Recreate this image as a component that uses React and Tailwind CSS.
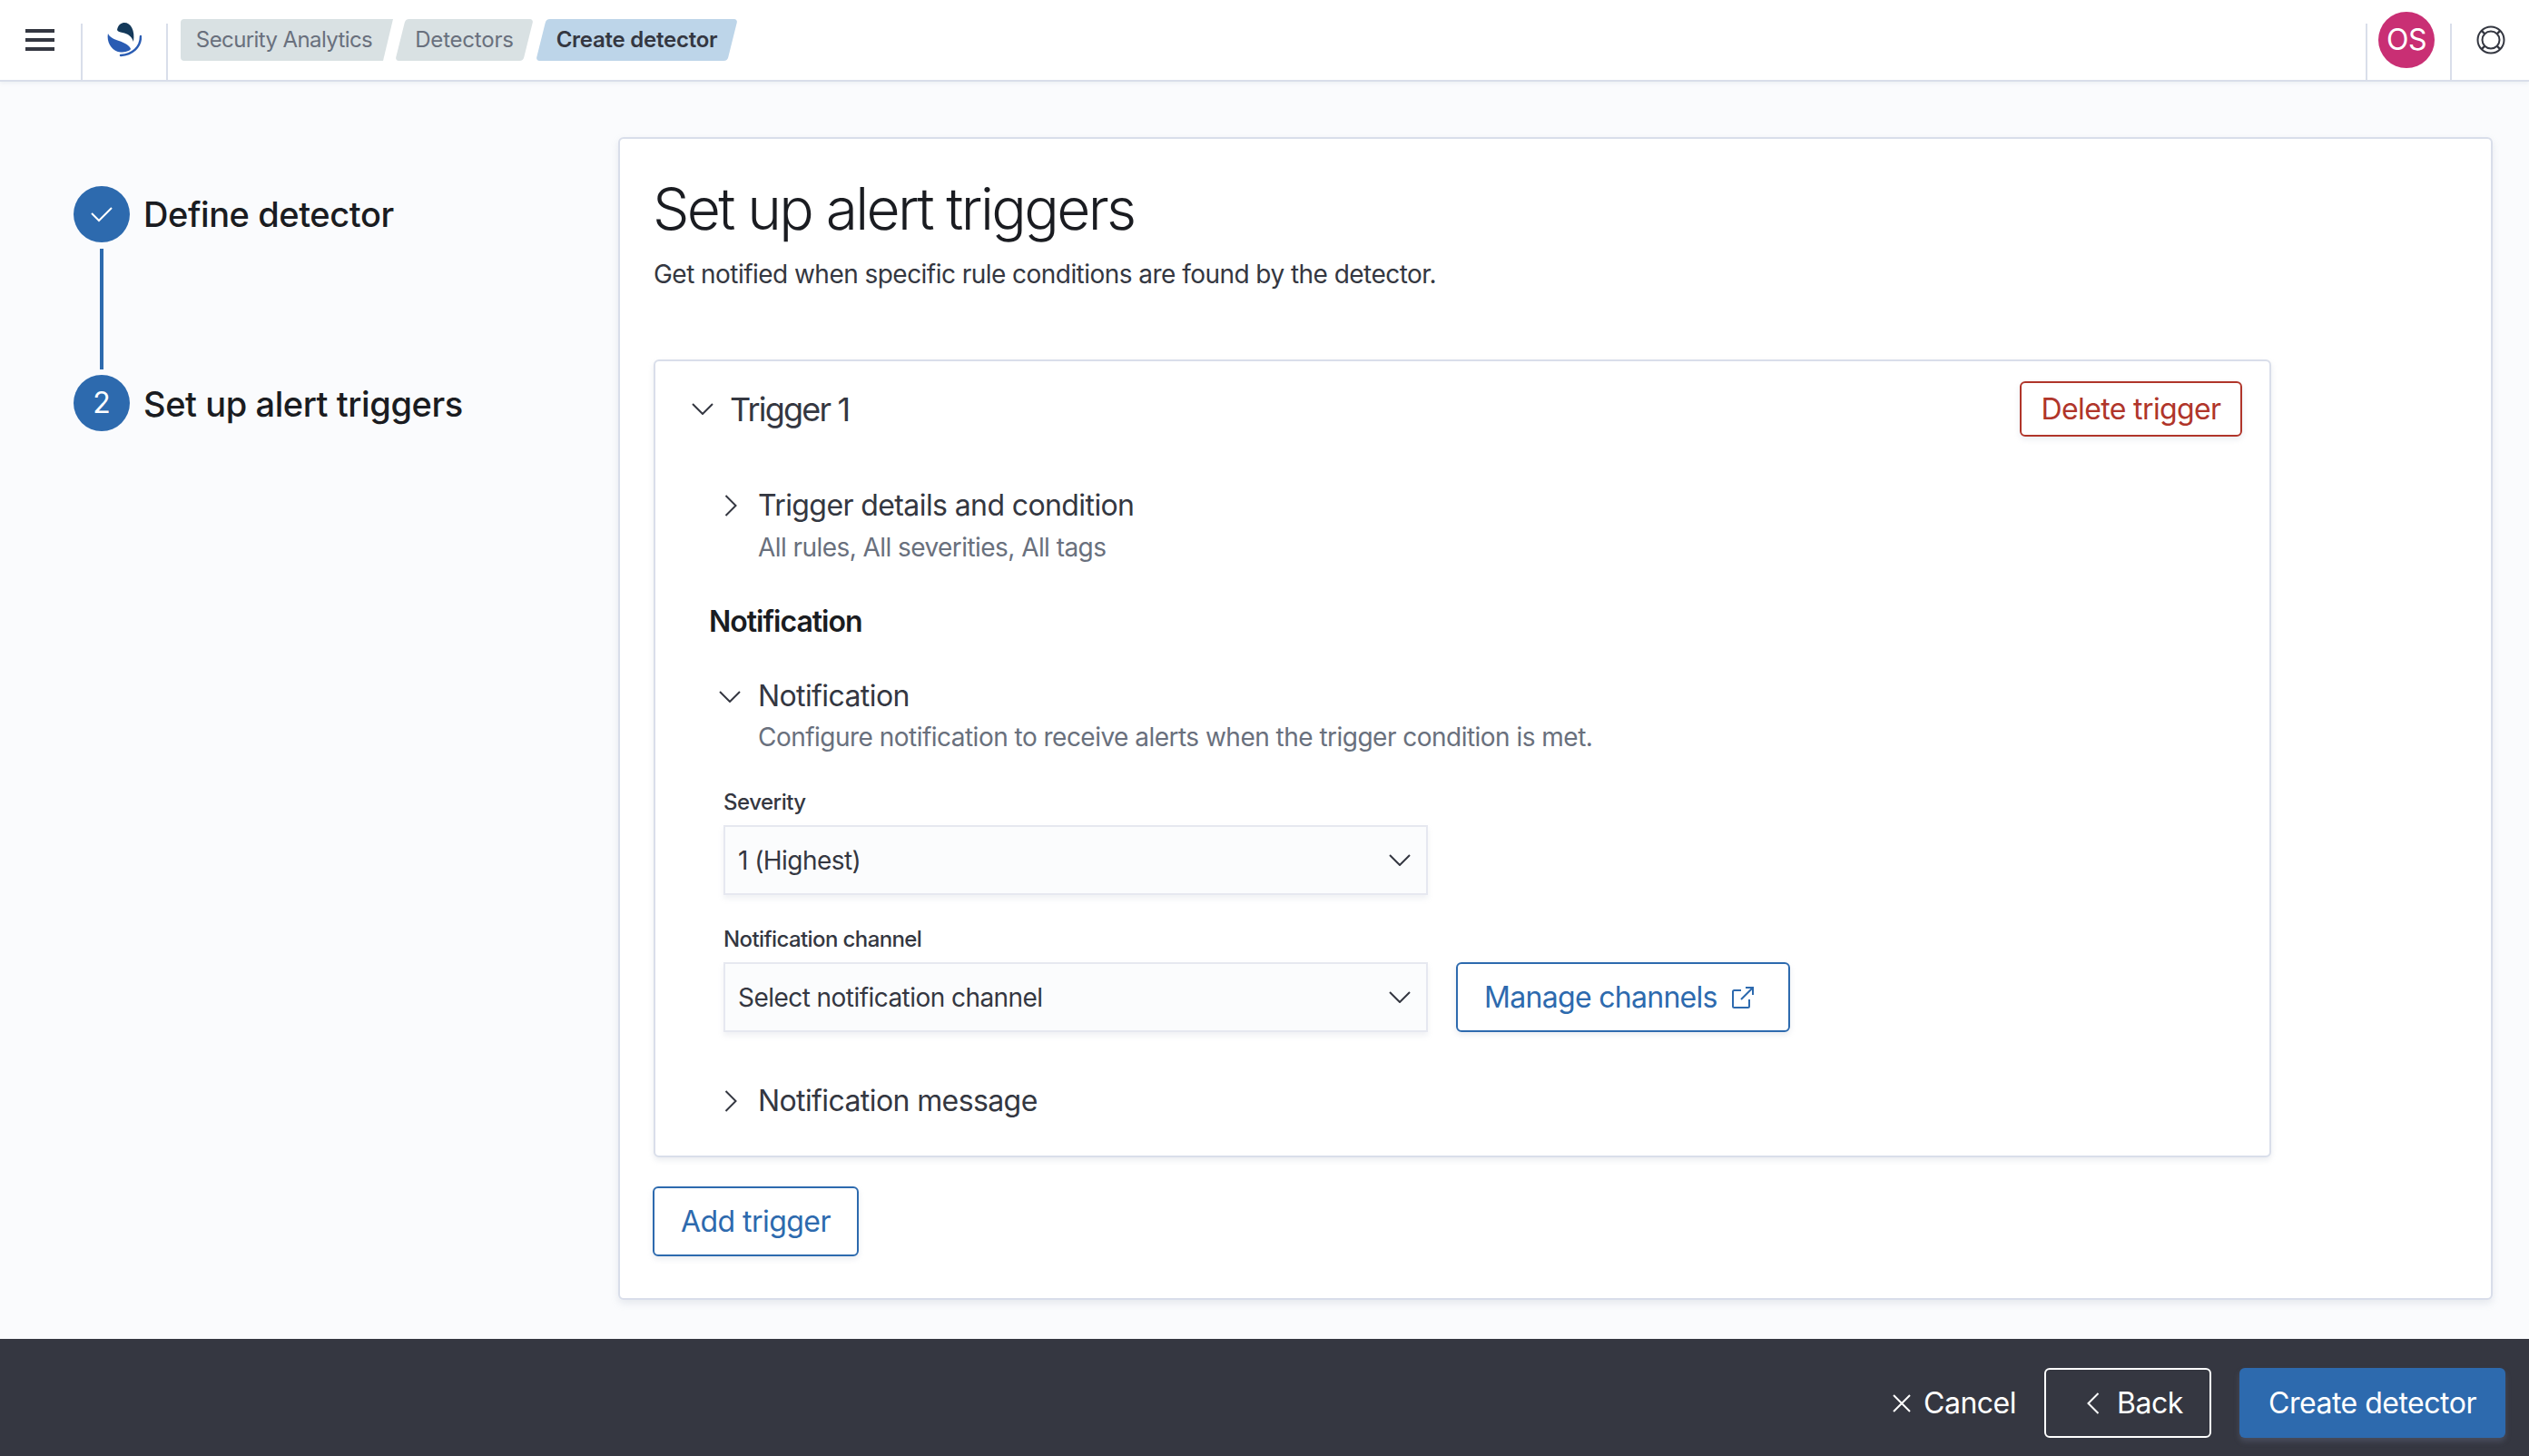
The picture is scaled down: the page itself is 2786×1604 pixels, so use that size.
const Sep = () => <div className="w-[2px] h-[62px] self-end bg-[#d9deea]" />

function Logo() {
  return (
    <svg width="38" height="38" viewBox="118 25 38 38" fill="none">
      <path d="M129 33C130 27 134 25 137 25C144 25 149 33 147 46C145 40 141 37 135 36C132 35.5 130 35 129 33Z" fill="#14395a" />
      <path d="M119 37C117 46 123 57 133 57.5C138 57.5 143 56 144 54C143 50 137 47 131 45C125 43 121 41 119 37Z" fill="#2a5cb3" />
      <path d="M155 40C155 52 146 60 133 61" stroke="#2a5cb3" strokeWidth="2.5" strokeLinecap="round" />
    </svg>
  )
}

function Help() {
  return (
    <svg width="32" height="32" viewBox="0 0 32 32" fill="none" stroke="#343741" strokeWidth="2">
      <circle cx="16" cy="16" r="14.5" />
      <circle cx="16" cy="16" r="9.5" />
      <path d="M5.5 5.5l3.8 3.8M26.5 5.5l-3.8 3.8M5.5 26.5l3.8-3.8M26.5 26.5l-3.8-3.8" strokeWidth="2.4" />
    </svg>
  )
}

function ExternalIcon() {
  return (
    <svg width="26" height="26" viewBox="0 0 26 26" fill="none" stroke="#2d6aae" strokeWidth="2">
      <path d="M11 5H3.5A1.5 1.5 0 0 0 2 6.5v16A1.5 1.5 0 0 0 3.5 24h15a1.5 1.5 0 0 0 1.5-1.5V15" />
      <path d="M11 15L24 2M16 2h8v8" />
    </svg>
  )
}

const ChevronDown = ({ className }) => (
  <svg width="24" height="13" viewBox="0 0 24 13" fill="none" stroke="currentColor" strokeWidth="2" className={className}>
    <path d="M1 1l11 11L23 1" />
  </svg>
)

const ChevronRight = ({ className }) => (
  <svg width="14" height="24" viewBox="0 0 14 24" fill="none" stroke="currentColor" strokeWidth="2" className={className}>
    <path d="M1.5 1L12.5 12L1.5 23" />
  </svg>
)

function Header() {
  return (
    <header className="h-[90px] shrink-0 flex bg-white border-b-2 border-[#d9deea] shadow-[0_2px_4px_rgba(152,162,179,0.12)]">
      <div className="w-[89px] h-[88px] flex flex-col items-center justify-center gap-[6px] pb-[1px] pr-[2px]">
        <div className="w-[32px] h-[4px] bg-[#343741]" />
        <div className="w-[32px] h-[4px] bg-[#343741]" />
        <div className="w-[32px] h-[4px] bg-[#343741]" />
      </div>
      <Sep />
      <div className="w-[92px] flex items-center justify-center pb-[1px]">
        <Logo />
      </div>
      <Sep />
      <nav className="flex items-start pt-[21px] ml-[14px] text-[24px] leading-[46px]">
        <div className="w-[234px] h-[46px] mr-[8px] bg-[#d9e1e3] text-[#69707d] tracking-[-0.6px] text-center rounded-l-[4px] pr-[6px] [clip-path:polygon(0_0,100%_0,calc(100%-11px)_100%,0_100%)]">
          Security Analytics
        </div>
        <div className="w-[141px] h-[46px] mr-[14px] bg-[#d9e1e3] text-[#69707d] tracking-[-0.2px] text-center rounded-[4px] -skew-x-[14deg]">
          <div className="skew-x-[14deg]">Detectors</div>
        </div>
        <div className="w-[211px] h-[46px] bg-[#bdd5e9] text-[#343741] font-semibold tracking-[-0.24px] text-center rounded-[4px] -skew-x-[14deg]">
          <div className="skew-x-[14deg]">Create detector</div>
        </div>
      </nav>
      <div className="ml-auto flex">
        <Sep />
        <div className="w-[91px] flex items-center justify-center pb-[1px] pr-[5px]">
          <div className="w-[62px] h-[62px] rounded-full bg-[#c92f74] text-white text-[32px] tracking-[-0.5px] flex items-center justify-center">OS</div>
        </div>
        <Sep />
        <div className="w-[85px] flex items-center justify-center pb-[1px]">
          <Help />
        </div>
      </div>
    </header>
  )
}

function Stepper() {
  return (
    <aside className="w-[681px] shrink-0 pl-[81px] pt-[115px] flex gap-[15px]">
      <div className="flex flex-col items-center">
        <div className="w-[62px] h-[62px] rounded-full bg-[#2d6aae] flex items-center justify-center">
          <svg width="24" height="18" viewBox="0 0 24 18" fill="none" stroke="white" strokeWidth="2">
            <path d="M1 8l8 8L23 2" />
          </svg>
        </div>
        <div className="w-[4px] h-[133px] mt-[7px] mb-[6px] bg-[#2d6aae]" />
        <div className="w-[62px] h-[62px] rounded-full bg-[#2d6aae] text-white text-[32px] flex items-center justify-center">2</div>
      </div>
      <div className="text-[#1a1c21] text-[38px] font-medium tracking-[-0.42px] leading-[62px]">
        <div>Define detector</div>
        <div className="mt-[147px]">Set up alert triggers</div>
      </div>
    </aside>
  )
}

function Select({ children }) {
  return (
    <div className="w-[776px] h-[77px] flex items-center justify-between pl-[14px] pr-[17px] text-[28px] tracking-[-0.55px] text-[#343741] bg-[#fbfcfd] border-2 border-[#e6e8f0] shadow-[0_4px_6px_rgba(152,162,179,0.15)]">
      {children}
      <ChevronDown />
    </div>
  )
}

function TriggerPanel() {
  return (
    <section className="w-[1782px] h-[879px] mt-[74px] bg-white border-2 border-[#d9deea] rounded-[6px] shadow-[0_3px_6px_rgba(152,162,179,0.2)] pt-[22px] pr-[30px] pb-[40px]">
      <div className="h-[61px] flex items-center pl-[40px]">
        <ChevronDown className="text-[#343741]" />
        <span className="ml-[18px] text-[36px] tracking-[-1.8px] text-[#343741]">Trigger 1</span>
        <button className="ml-auto w-[245px] h-[61px] text-[32px] tracking-[-0.63px] text-[#b0352a] border-2 border-[#b0352a] rounded-[6px] shadow-[0_3px_6px_rgba(152,162,179,0.2)]">
          Delete trigger
        </button>
      </div>

      <div className="h-[40px] mt-[56px] flex items-center pl-[76px] text-[32px] tracking-[-0.6px] text-[#343741]">
        <ChevronRight />
        <span className="ml-[23px]">Trigger details and condition</span>
      </div>
      <div className="mt-[8px] pl-[113px] text-[28px] leading-[36px] tracking-[-0.56px] text-[#69707d]">All rules, All severities, All tags</div>

      <div className="mt-[44px] pl-[59px] text-[32px] leading-[40px] font-semibold tracking-[-1px] text-[#1a1c21]">Notification</div>

      <div className="h-[40px] mt-[42px] flex items-center pl-[70px] text-[32px] tracking-[-0.6px] text-[#343741]">
        <ChevronDown />
        <span className="ml-[19px]">Notification</span>
      </div>
      <div className="mt-[7px] pl-[113px] text-[28px] leading-[36px] tracking-[-0.52px] text-[#69707d]">
        Configure notification to receive alerts when the trigger condition is met.
      </div>

      <div className="pl-[75px]">
        <div className="mt-[38px] mb-[9px] text-[24px] leading-[32px] font-medium tracking-[-0.5px] text-[#343741]">Severity</div>
        <Select>1 (Highest)</Select>

        <div className="mt-[33px] mb-[9px] text-[24px] leading-[32px] font-medium tracking-[-0.6px] text-[#343741]">Notification channel</div>
        <div className="flex gap-[31px]">
          <Select>Select notification channel</Select>
          <button className="w-[368px] h-[77px] flex items-center gap-[15px] pl-[29px] text-[32px] tracking-[-0.7px] text-[#2d6aae] border-2 border-[#2d6aae] rounded-[6px] shadow-[0_3px_6px_rgba(152,162,179,0.2)]">
            Manage channels
            <ExternalIcon />
          </button>
        </div>
      </div>

      <div className="h-[40px] mt-[56px] flex items-center pl-[76px] text-[32px] tracking-[-0.6px] text-[#343741]">
        <ChevronRight />
        <span className="ml-[23px]">Notification message</span>
      </div>
    </section>
  )
}

export default function App() {
  return (
    <div className="w-[2786px] h-[1604px] flex flex-col overflow-hidden bg-[#fafbfd] font-['Inter',sans-serif]">
      <Header />
      <main className="flex-1 flex">
        <Stepper />
        <div className="w-[2065px] h-[1281px] mt-[61px] bg-white border-2 border-[#d9deea] rounded-[6px] shadow-[0_4px_8px_rgba(152,162,179,0.2)] pl-[37px] pt-[37px]">
          <h1 className="-ml-[1px] text-[64px] leading-[80px] font-light tracking-[-2.6px] text-[#1a1c21]">Set up alert triggers</h1>
          <p className="mt-[12px] text-[28px] leading-[40px] tracking-[-0.54px] text-[#343741]">
            Get notified when specific rule conditions are found by the detector.
          </p>
          <TriggerPanel />
          <button className="w-[227px] h-[77px] mt-[32px] -ml-[1px] text-[32px] tracking-[-0.55px] text-[#2d6aae] border-2 border-[#2d6aae] rounded-[6px] shadow-[0_3px_6px_rgba(152,162,179,0.2)]">
            Add trigger
          </button>
        </div>
      </main>
      <footer className="h-[129px] shrink-0 bg-[#353741] flex items-start justify-end pt-[32px] pr-[26px] text-white text-[32px] tracking-[-0.5px]">
        <button className="h-[77px] flex items-center mr-[31px]">
          <svg width="20" height="20" viewBox="0 0 20 20" fill="none" stroke="white" strokeWidth="2">
            <path d="M1 1l18 18M19 1L1 19" />
          </svg>
          <span className="ml-[14px]">Cancel</span>
        </button>
        <button className="w-[184px] h-[77px] flex items-center pl-[45px] gap-[19px] border-2 border-white rounded-[6px] mr-[31px]">
          <ChevronRight className="rotate-180" />
          Back
        </button>
        <button className="w-[293px] h-[77px] bg-[#2d6aae] rounded-[6px] shadow-[0_4px_6px_rgba(120,130,160,0.3)]">
          Create detector
        </button>
      </footer>
    </div>
  )
}
